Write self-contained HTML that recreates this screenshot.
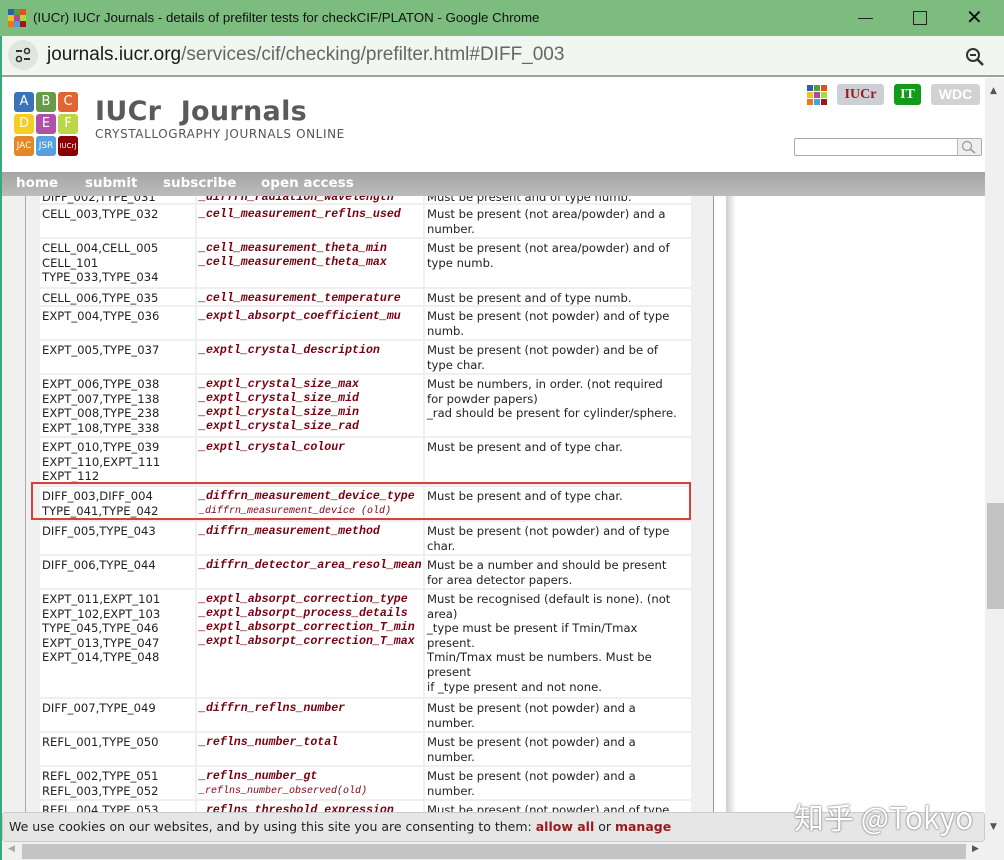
<!DOCTYPE html>
<html><head><meta charset="utf-8"><style>
*{margin:0;padding:0;box-sizing:border-box}
body{width:1004px;height:860px;overflow:hidden;background:#fff;font-family:"DejaVu Sans","Liberation Sans",sans-serif;position:relative}
.a{position:absolute}
.titlebar{left:0;top:0;width:1004px;height:36px;background:#7cbc7e;color:#111;font:13.3px "Liberation Sans","DejaVu Sans",sans-serif}
.addr{left:0;top:36px;width:1004px;height:41px;background:#f1f6f1;border-bottom:2px solid #9aa59a}
.c1,.c2,.c3{position:absolute;background:#fff;font-size:11.6px;line-height:14.6px;color:#222;white-space:nowrap;padding:2px 2px}
.c1{left:40px;width:155px}
.c2{left:197px;width:226px;color:#7a0010;font:bold italic 11.6px "Liberation Mono",monospace;line-height:14px;padding-top:3px}
.c2 small{font:italic 10px "Liberation Mono",monospace;font-weight:normal}
.c3{left:425px;width:266px}
.sq{position:absolute;width:20px;height:20px;border-radius:3px;color:#fff;font-size:13px;text-align:center;line-height:20px;opacity:.85}
</style></head><body>
<div class="a titlebar">
 <div class="a" style="left:8px;top:9px;width:18px;height:18px;display:grid;grid-template-columns:repeat(3,6px)">
  <i style="background:#2a5fb0"></i><i style="background:#5c9a3a"></i><i style="background:#d9541e"></i>
  <i style="background:#f2c21a"></i><i style="background:#a94aa0"></i><i style="background:#b7d43a"></i>
  <i style="background:#e47a1a"></i><i style="background:#4aa0d8"></i><i style="background:#9a1a1a"></i></div>
 <div class="a" style="left:33px;top:10px">(IUCr) IUCr Journals - details of prefilter tests for checkCIF/PLATON - Google Chrome</div>
 <div class="a" style="left:858px;top:18px;width:15px;height:1px;background:#222"></div>
 <div class="a" style="left:913px;top:11px;width:14px;height:14px;border:1px solid #222"></div>
 <div class="a" style="left:966px;top:5px;font-size:20px">✕</div>
</div>
<div class="a addr">
 <div class="a" style="left:8px;top:4px;width:30px;height:30px;border-radius:15px;background:#dfe6df"></div>
 <svg class="a" style="left:14px;top:11px" width="18" height="16"><line x1="2" y1="4" x2="8" y2="4" stroke="#333" stroke-width="2"/><circle cx="13" cy="4" r="2.5" fill="none" stroke="#333" stroke-width="1.6"/><line x1="10" y1="12" x2="16" y2="12" stroke="#333" stroke-width="2"/><circle cx="5" cy="12" r="2.5" fill="none" stroke="#333" stroke-width="1.6"/></svg>
 <div class="a" style="left:47px;top:8px;font:19px 'Liberation Sans',sans-serif;color:#1a1a1a">journals.iucr.org<span style="color:#666">/services/cif/checking/prefilter.html#DIFF_003</span></div>
 <svg class="a" style="left:964px;top:10px" width="22" height="22"><circle cx="9" cy="9" r="6" fill="none" stroke="#333" stroke-width="2"/><line x1="6" y1="9" x2="12" y2="9" stroke="#333" stroke-width="2"/><line x1="13" y1="13" x2="19" y2="19" stroke="#333" stroke-width="2.5"/></svg>
</div>
<div class="a" style="left:0;top:36px;width:2px;height:824px;background:#3aa878"></div>
<div class="a" style="left:14px;top:92px;width:66px;height:66px">
 <div class="sq" style="left:0;top:0;background:#1a5bb0">A</div><div class="sq" style="left:22px;top:0;background:#4e8a2a">B</div><div class="sq" style="left:44px;top:0;background:#de4a10">C</div>
 <div class="sq" style="left:0;top:22px;background:#f5c400">D</div><div class="sq" style="left:22px;top:22px;background:#a0349a">E</div><div class="sq" style="left:44px;top:22px;background:#b2d02a">F</div>
 <div class="sq" style="left:0;top:44px;background:#e07400;font-size:9px">JAC</div><div class="sq" style="left:22px;top:44px;background:#3a90d8;font-size:9px">JSR</div><div class="sq" style="left:44px;top:44px;background:#8a0000;font-size:7px;opacity:1">IUCrJ</div>
</div>
<div class="a" style="left:95px;top:96px;font:bold 27px 'DejaVu Sans',sans-serif;color:#5a5a5a;letter-spacing:0.3px">IUCr&nbsp; Journals</div>
<div class="a" style="left:95px;top:127px;font:12px 'DejaVu Sans',sans-serif;color:#555;letter-spacing:0.6px">CRYSTALLOGRAPHY JOURNALS ONLINE</div>
<div class="a" style="left:807px;top:85px;width:20px;height:20px;display:grid;grid-template-columns:repeat(3,6px);gap:1px">
  <i style="background:#2a5fb0"></i><i style="background:#5c9a3a"></i><i style="background:#d9541e"></i>
  <i style="background:#f2c21a"></i><i style="background:#a94aa0"></i><i style="background:#b7d43a"></i>
  <i style="background:#e47a1a"></i><i style="background:#4aa0d8"></i><i style="background:#9a1a1a"></i></div>
<div class="a" style="left:837px;top:84px;width:47px;height:21px;background:#ccd0d6;border-radius:3px;color:#a01818;font:bold 14px 'Liberation Serif',serif;text-align:center;line-height:21px">IUCr</div>
<div class="a" style="left:894px;top:84px;width:27px;height:21px;background:#129a1a;border-radius:3px;color:#fff;font:bold 14px 'Liberation Serif',serif;text-align:center;line-height:21px">IT</div>
<div class="a" style="left:931px;top:84px;width:49px;height:21px;background:#d2d2d2;border-radius:3px;color:#fff;font:bold 14px 'Liberation Sans',sans-serif;text-align:center;line-height:21px">WDC</div>
<div class="a" style="left:794px;top:138px;width:188px;height:18px;border:1px solid #aaa;border-radius:2px;background:#fff"></div>
<div class="a" style="left:957px;top:139px;width:24px;height:16px;background:#eee;border-left:1px solid #bbb"></div>
<svg class="a" style="left:961px;top:140px" width="16" height="14"><circle cx="6" cy="6" r="4.5" fill="none" stroke="#999" stroke-width="1.2"/><line x1="9" y1="9" x2="14" y2="13" stroke="#999" stroke-width="1.5"/></svg>
<div class="a" style="left:985px;top:78px;width:19px;height:764px;background:#f0f0f0"></div>
<div class="a" style="left:990px;top:86px;font-size:9px;color:#555">▲</div>
<div class="a" style="left:987px;top:503px;width:17px;height:106px;background:#c2c2c2"></div>
<div class="a" style="left:990px;top:822px;font-size:9px;color:#555">▼</div>
<div class="a" style="left:12px;top:196px;width:714px;height:616px;background:#f0f0f0"></div>
<div class="a" style="left:25px;top:196px;width:1px;height:616px;background:#aaa"></div>
<div class="a" style="left:713px;top:196px;width:1px;height:616px;background:#999"></div>
<div class="a" style="left:714px;top:196px;width:12px;height:616px;background:#fff"></div>
<div class="a" style="left:726px;top:196px;width:10px;height:616px;background:linear-gradient(90deg,#ccc,#fff)"></div>
<div class="a" style="left:2px;top:196px;width:10px;height:616px;background:#f0f0f0"></div>
<div class="a" style="left:38px;top:190px;width:655px;height:630px;background:#efefef"></div>

<div class="c1" style="top:188px;height:15px">DIFF_002,TYPE_031</div><div class="c2" style="top:188px;height:15px">_diffrn_radiation_wavelength</div><div class="c3" style="top:188px;height:15px">Must be present and of type numb.</div>
<div class="c1" style="top:205px;height:32px">CELL_003,TYPE_032</div><div class="c2" style="top:205px;height:32px">_cell_measurement_reflns_used</div><div class="c3" style="top:205px;height:32px">Must be present (not area/powder) and a<br>number.</div>
<div class="c1" style="top:239px;height:48px">CELL_004,CELL_005<br>CELL_101<br>TYPE_033,TYPE_034</div><div class="c2" style="top:239px;height:48px">_cell_measurement_theta_min<br>_cell_measurement_theta_max</div><div class="c3" style="top:239px;height:48px">Must be present (not area/powder) and of<br>type numb.</div>
<div class="c1" style="top:289px;height:16px">CELL_006,TYPE_035</div><div class="c2" style="top:289px;height:16px">_cell_measurement_temperature</div><div class="c3" style="top:289px;height:16px">Must be present and of type numb.</div>
<div class="c1" style="top:307px;height:32px">EXPT_004,TYPE_036</div><div class="c2" style="top:307px;height:32px">_exptl_absorpt_coefficient_mu</div><div class="c3" style="top:307px;height:32px">Must be present (not powder) and of type<br>numb.</div>
<div class="c1" style="top:341px;height:32px">EXPT_005,TYPE_037</div><div class="c2" style="top:341px;height:32px">_exptl_crystal_description</div><div class="c3" style="top:341px;height:32px">Must be present (not powder) and be of<br>type char.</div>
<div class="c1" style="top:375px;height:61px">EXPT_006,TYPE_038<br>EXPT_007,TYPE_138<br>EXPT_008,TYPE_238<br>EXPT_108,TYPE_338</div><div class="c2" style="top:375px;height:61px">_exptl_crystal_size_max<br>_exptl_crystal_size_mid<br>_exptl_crystal_size_min<br>_exptl_crystal_size_rad</div><div class="c3" style="top:375px;height:61px">Must be numbers, in order. (not required<br>for powder papers)<br>_rad should be present for cylinder/sphere.</div>
<div class="c1" style="top:438px;height:44px;overflow:hidden">EXPT_010,TYPE_039<br>EXPT_110,EXPT_111<br>EXPT_112</div><div class="c2" style="top:438px;height:44px">_exptl_crystal_colour</div><div class="c3" style="top:438px;height:44px">Must be present and of type char.</div>
<div class="c1" style="top:487px;height:33px">DIFF_003,DIFF_004<br>TYPE_041,TYPE_042</div><div class="c2" style="top:487px;height:33px">_diffrn_measurement_device_type<br><small>_diffrn_measurement_device (old)</small></div><div class="c3" style="top:487px;height:33px">Must be present and of type char.</div>
<div class="c1" style="top:522px;height:32px">DIFF_005,TYPE_043</div><div class="c2" style="top:522px;height:32px">_diffrn_measurement_method</div><div class="c3" style="top:522px;height:32px">Must be present (not powder) and of type<br>char.</div>
<div class="c1" style="top:556px;height:32px">DIFF_006,TYPE_044</div><div class="c2" style="top:556px;height:32px;overflow:hidden">_diffrn_detector_area_resol_mean</div><div class="c3" style="top:556px;height:32px">Must be a number and should be present<br>for area detector papers.</div>
<div class="c1" style="top:590px;height:107px">EXPT_011,EXPT_101<br>EXPT_102,EXPT_103<br>TYPE_045,TYPE_046<br>EXPT_013,TYPE_047<br>EXPT_014,TYPE_048</div><div class="c2" style="top:590px;height:107px">_exptl_absorpt_correction_type<br>_exptl_absorpt_process_details<br>_exptl_absorpt_correction_T_min<br>_exptl_absorpt_correction_T_max</div><div class="c3" style="top:590px;height:107px">Must be recognised (default is none). (not<br>area)<br>_type must be present if Tmin/Tmax<br>present.<br>Tmin/Tmax must be numbers. Must be<br>present<br>if _type present and not none.</div>
<div class="c1" style="top:699px;height:32px">DIFF_007,TYPE_049</div><div class="c2" style="top:699px;height:32px">_diffrn_reflns_number</div><div class="c3" style="top:699px;height:32px">Must be present (not powder) and a<br>number.</div>
<div class="c1" style="top:733px;height:32px">REFL_001,TYPE_050</div><div class="c2" style="top:733px;height:32px">_reflns_number_total</div><div class="c3" style="top:733px;height:32px">Must be present (not powder) and a<br>number.</div>
<div class="c1" style="top:767px;height:32px">REFL_002,TYPE_051<br>REFL_003,TYPE_052</div><div class="c2" style="top:767px;height:32px">_reflns_number_gt<br><small>_reflns_number_observed(old)</small></div><div class="c3" style="top:767px;height:32px">Must be present (not powder) and a<br>number.</div>
<div class="c1" style="top:801px;height:20px">REFL_004,TYPE_053</div><div class="c2" style="top:801px;height:20px">_reflns_threshold_expression</div><div class="c3" style="top:801px;height:20px">Must be present (not powder) and of type</div>
<div class="a" style="left:31px;top:482px;width:660px;height:38px;border:2px solid #d8403c"></div>
<div class="a" style="left:2px;top:172px;width:983px;height:24px;background:linear-gradient(#a4a4a4,#bcbcbc);color:#fff;font:bold 13.5px 'DejaVu Sans',sans-serif;line-height:23px">
 <span class="a" style="left:14px">home</span><span class="a" style="left:83px">submit</span><span class="a" style="left:161px">subscribe</span><span class="a" style="left:259px">open access</span></div>
<div class="a" style="left:2px;top:812px;width:983px;height:30px;background:#e6e6e6;border:1px solid #ccc;border-radius:3px;font-size:12.5px;line-height:28px;padding-left:6px;color:#222">We use cookies on our websites, and by using this site you are consenting to them: <b style="color:#9a1a1a">allow all</b> or <b style="color:#9a1a1a">manage</b></div>
<div class="a" style="left:794px;top:794px;font:30px 'Noto Sans CJK SC',sans-serif;color:#fff;text-shadow:0 0 2px #777,0 0 1px #555">知乎 @Tokyo</div>
<div class="a" style="left:2px;top:842px;width:1002px;height:18px;background:#f0f0f0"></div>
<div class="a" style="left:22px;top:844px;width:944px;height:15px;background:#c4c4c4"></div>
<div class="a" style="left:8px;top:844px;font-size:9px;color:#aaa">◀</div>
<div class="a" style="left:972px;top:844px;font-size:9px;color:#555">▶</div>
</body></html>
